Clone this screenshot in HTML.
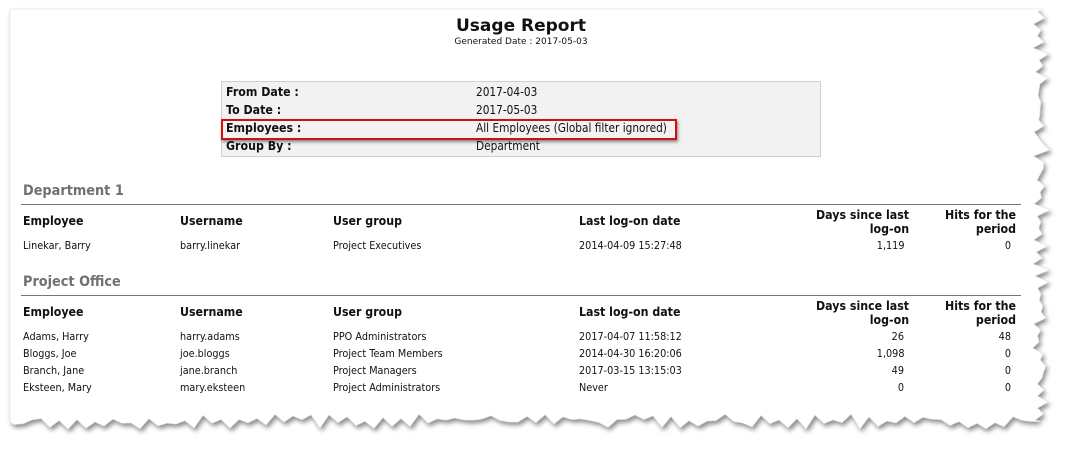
<!DOCTYPE html>
<html><head><meta charset="utf-8"><style>
body{margin:0;width:1065px;height:449px;background:#fff;position:relative;overflow:hidden;font-family:"DejaVu Sans","Liberation Sans",sans-serif;color:#111}
.a{position:absolute;white-space:nowrap;line-height:1}
.b{font-weight:bold}
.s{font-size:11px;transform:scaleX(0.88);transform-origin:left center}
.r{transform-origin:right center}
.h{font-size:12px;font-weight:bold;transform:scaleX(0.92);transform-origin:left center}
.g{font-size:14px;font-weight:bold;color:#707070;transform:scaleX(0.92);transform-origin:left center}
.line{position:absolute;left:21px;width:1000px;height:1px;background:#777}
</style></head><body>
<svg id="paper" width="1065" height="449" style="position:absolute;left:0;top:0">
<defs><filter id="sh" x="-5%" y="-5%" width="110%" height="115%"><feDropShadow dx="2" dy="3" stdDeviation="2.5" flood-color="#000" flood-opacity="0.45"/></filter></defs>
<path id="pp" fill="#fff" stroke="#e4e4e4" stroke-width="0.6" filter="url(#sh)" d=""/>
</svg>
<script>
(function(){var s=7;function r(){s=(s*9301+49297)%233280;return s/233280;}
var p="M10,9 L1040,9 ";
for(var y=12;y<424;y+=6){var x=1038+r()*12-(y%12==0?6:0);p+="L"+x.toFixed(1)+","+y+" ";}
for(var x=1040;x>10;x-=9){var yy=419+r()*10-(x%18<9?5:0);p+="L"+x+","+yy.toFixed(1)+" ";}
p+="L10,422 Z";document.getElementById('pp').setAttribute('d',p);})();
</script>
<div class="a b" style="left:0;width:1042px;text-align:center;top:18px;font-size:17px">Usage Report</div>
<div class="a" style="left:0;width:1042px;text-align:center;top:38px;font-size:9px">Generated Date : 2017-05-03</div>
<div style="position:absolute;left:221px;top:81px;width:598px;height:74px;background:#f2f2f2;border:1px solid #d0d0d0"></div>
<div style="position:absolute;left:221px;top:119px;width:452px;height:17px;border:2px solid #d01010;box-shadow:1px 2px 3px rgba(0,0,0,.45)"></div>
<div class="a h" style="left:226px;top:86px">From Date :</div>
<div class="a h" style="left:226px;top:104px">To Date :</div>
<div class="a h" style="left:226px;top:122px">Employees :</div>
<div class="a h" style="left:226px;top:140px">Group By :</div>
<div class="a s" style="left:476px;top:86px;font-size:12px">2017-04-03</div>
<div class="a s" style="left:476px;top:104px;font-size:12px">2017-05-03</div>
<div class="a s" style="left:476px;top:122px;font-size:12px">All Employees (Global filter ignored)</div>
<div class="a s" style="left:476px;top:140px;font-size:12px">Department</div>

<div class="a g" style="left:23px;top:184px">Department 1</div>
<div class="line" style="top:204px"></div>
<div class="a h" style="left:23px;top:215px">Employee</div>
<div class="a h" style="left:180px;top:215px">Username</div>
<div class="a h" style="left:333px;top:215px">User group</div>
<div class="a h" style="left:579px;top:215px">Last log-on date</div>
<div class="a h r" style="right:148px;top:208px;text-align:right;line-height:14px">Days since last<br>log-on</div>
<div class="a h r" style="right:43px;top:208px;text-align:right;line-height:14px">Hits for the<br>period</div>
<div class="a s" style="left:23px;top:240px">Linekar, Barry</div>
<div class="a s" style="left:180px;top:240px">barry.linekar</div>
<div class="a s" style="left:333px;top:240px">Project Executives</div>
<div class="a s" style="left:579px;top:240px">2014-04-09 15:27:48</div>
<div class="a s r" style="right:161px;top:240px">1,119</div>
<div class="a s r" style="right:54px;top:240px">0</div>

<div class="a g" style="left:23px;top:275px">Project Office</div>
<div class="line" style="top:295px"></div>
<div class="a h" style="left:23px;top:306px">Employee</div>
<div class="a h" style="left:180px;top:306px">Username</div>
<div class="a h" style="left:333px;top:306px">User group</div>
<div class="a h" style="left:579px;top:306px">Last log-on date</div>
<div class="a h r" style="right:148px;top:299px;text-align:right;line-height:14px">Days since last<br>log-on</div>
<div class="a h r" style="right:43px;top:299px;text-align:right;line-height:14px">Hits for the<br>period</div>

<div class="a s" style="left:23px;top:331px">Adams, Harry</div>
<div class="a s" style="left:180px;top:331px">harry.adams</div>
<div class="a s" style="left:333px;top:331px">PPO Administrators</div>
<div class="a s" style="left:579px;top:331px">2017-04-07 11:58:12</div>
<div class="a s r" style="right:161px;top:331px">26</div>
<div class="a s r" style="right:54px;top:331px">48</div>

<div class="a s" style="left:23px;top:348px">Bloggs, Joe</div>
<div class="a s" style="left:180px;top:348px">joe.bloggs</div>
<div class="a s" style="left:333px;top:348px">Project Team Members</div>
<div class="a s" style="left:579px;top:348px">2014-04-30 16:20:06</div>
<div class="a s r" style="right:161px;top:348px">1,098</div>
<div class="a s r" style="right:54px;top:348px">0</div>

<div class="a s" style="left:23px;top:365px">Branch, Jane</div>
<div class="a s" style="left:180px;top:365px">jane.branch</div>
<div class="a s" style="left:333px;top:365px">Project Managers</div>
<div class="a s" style="left:579px;top:365px">2017-03-15 13:15:03</div>
<div class="a s r" style="right:161px;top:365px">49</div>
<div class="a s r" style="right:54px;top:365px">0</div>

<div class="a s" style="left:23px;top:382px">Eksteen, Mary</div>
<div class="a s" style="left:180px;top:382px">mary.eksteen</div>
<div class="a s" style="left:333px;top:382px">Project Administrators</div>
<div class="a s" style="left:579px;top:382px">Never</div>
<div class="a s r" style="right:161px;top:382px">0</div>
<div class="a s r" style="right:54px;top:382px">0</div>
</body></html>
